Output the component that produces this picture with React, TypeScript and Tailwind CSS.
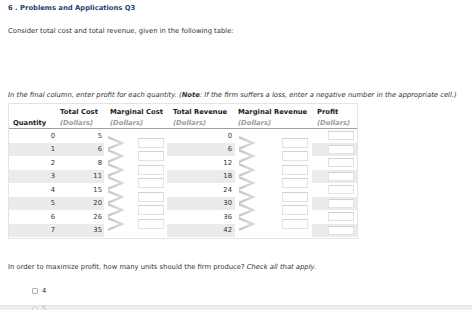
import React from "react";

const TC = [5, 6, 8, 11, 15, 20, 26, 35];
const TR = [0, 6, 12, 18, 24, 30, 36, 42];

function Chevron() {
  return (
    <svg width="17" height="14" viewBox="0 0 17 14" className="shrink-0">
      <defs>
        <linearGradient id="cg" x1="0" y1="0" x2="1" y2="0">
          <stop offset="0" stopColor="#c4c4c4" />
          <stop offset="1" stopColor="#dedede" />
        </linearGradient>
      </defs>
      <polygon points="0,0 17,7 0,14 0,11.5 11,7 0,2.5" fill="url(#cg)" />
    </svg>
  );
}

function Input({ w = "w-[26px]", h = "h-[10px]" }: { w?: string; h?: string }) {
  return <div className={`${w} ${h} bg-white border border-[#e2e2e2] border-t-[#d2d2d2] shrink-0`} />;
}

export default function App() {
  const rowH = "h-[13.5px]";
  const stripe = (i: number) => (i % 2 === 1 ? "bg-[#ebebeb]" : "bg-white");
  return (
    <div
      className="w-[474px] h-[310px] overflow-hidden bg-white relative text-[#333] text-[6.8px] leading-[8px]"
      style={{ fontFamily: '"DejaVu Sans", Verdana, sans-serif' }}
    >
      <div className="pl-2 pt-[4px]">
        <div className="font-bold text-[#22426e] text-[6.8px] leading-[8px]">6 . Problems and Applications Q3</div>
        <div className="mt-[15px]">Consider total cost and total revenue, given in the following table:</div>
        <div className="mt-[56px] italic whitespace-nowrap">
          In the final column, enter profit for each quantity. (<span className="font-bold">Note</span>: If the firm
          suffers a loss, enter a negative number in the appropriate cell.)
        </div>

        <div className="mt-[4px] w-[350px] border border-[#e4e4e4] pb-[1px]">
          {/* header */}
          <div className="flex h-[25px] border-b border-[#a0a0a0] font-bold text-[#222] whitespace-nowrap">
            <div className="w-[50px] shrink-0 pl-[4px] flex flex-col justify-end pb-[1px]">
              <div>Quantity</div>
            </div>
            <div className="w-[45px] shrink-0 pl-[1px] flex flex-col justify-end pb-[1px]">
              <div>Total Cost</div>
              <div className="mt-[3px] italic font-bold text-[#9a9a9a]">(Dollars)</div>
            </div>
            <div className="w-[63px] shrink-0 pl-[6px] flex flex-col justify-end pb-[1px]">
              <div>Marginal Cost</div>
              <div className="mt-[3px] italic font-bold text-[#9a9a9a]">(Dollars)</div>
            </div>
            <div className="w-[68px] shrink-0 pl-[6px] flex flex-col justify-end pb-[1px]">
              <div>Total Revenue</div>
              <div className="mt-[3px] italic font-bold text-[#9a9a9a]">(Dollars)</div>
            </div>
            <div className="w-[77px] shrink-0 pl-[3px] flex flex-col justify-end pb-[1px]">
              <div>Marginal Revenue</div>
              <div className="mt-[3px] italic font-bold text-[#9a9a9a]">(Dollars)</div>
            </div>
            <div className="w-[45px] shrink-0 pl-[5px] flex flex-col justify-end pb-[1px]">
              <div>Profit</div>
              <div className="mt-[3px] italic font-bold text-[#9a9a9a]">(Dollars)</div>
            </div>
          </div>
          {/* body */}
          <div className="flex">
            <div className="w-[50px] shrink-0 flex flex-col">
              {TC.map((_, i) => (
                <div key={i} className={`${rowH} ${stripe(i)} flex items-center justify-end pr-[4px]`}>
                  {i}
                </div>
              ))}
            </div>
            <div className="w-[45px] shrink-0 flex flex-col">
              {TC.map((v, i) => (
                <div key={i} className={`${rowH} ${stripe(i)} flex items-center justify-end pr-[2px]`}>
                  {v}
                </div>
              ))}
            </div>
            <div className="w-[63px] shrink-0 flex flex-col pt-[6.75px]">
              {TC.slice(1).map((_, i) => (
                <div key={i} className={`${rowH} flex items-center pl-[4px] pr-[3px] justify-between`}>
                  <Chevron />
                  <Input />
                </div>
              ))}
            </div>
            <div className="w-[68px] shrink-0 flex flex-col">
              {TR.map((v, i) => (
                <div key={i} className={`${rowH} ${stripe(i)} flex items-center justify-end pr-[3px]`}>
                  {v}
                </div>
              ))}
            </div>
            <div className="w-[77px] shrink-0 flex flex-col pt-[6.75px]">
              {TR.slice(1).map((_, i) => (
                <div key={i} className={`${rowH} flex items-center pl-[4px] pr-[4px] justify-between`}>
                  <Chevron />
                  <Input />
                </div>
              ))}
            </div>
            <div className="w-[45px] shrink-0 flex flex-col">
              {TR.map((_, i) => (
                <div key={i} className={`${rowH} ${stripe(i)} flex items-center justify-end pr-[3px]`}>
                  <Input h="h-[9px]" />
                </div>
              ))}
            </div>
          </div>
        </div>

        <div className="mt-[24px] whitespace-nowrap">
          In order to maximize profit, how many units should the firm produce? <span className="italic">Check all that apply.</span>
        </div>
        <div className="mt-[16px] pl-[24px] flex flex-col gap-[10px]">
          <div className="flex items-center gap-[4px]">
            <div className="w-[6px] h-[6px] border border-[#b0b0b0] rounded-[1px] bg-white" />
            <span>4</span>
          </div>
          <div className="flex items-center gap-[4px]">
            <div className="w-[6px] h-[6px] border border-[#b0b0b0] rounded-full bg-white" />
            <span>5</span>
          </div>
        </div>
      </div>
      <div className="absolute left-0 bottom-0 w-[472px] h-[5px] bg-[#e8e8e8]/70 border-t border-[#e4e4e4]" />
    </div>
  );
}
